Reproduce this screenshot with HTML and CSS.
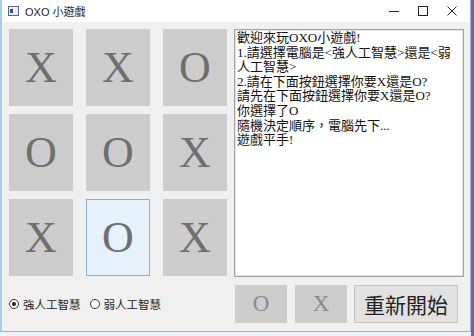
FILE: index.html
```html
<!DOCTYPE html>
<html lang="zh-Hant">
<head>
<meta charset="utf-8">
<title>OXO 小遊戲</title>
<link rel="stylesheet" href="styles.css">
</head>
<body>
<div class="screen">
  <div class="window">
    <div class="titlebar">
      <span class="app-icon"><span class="app-icon-dot"></span></span>
      <span class="title">OXO 小遊戲</span>
      <span class="controls">
        <span class="ctl"><svg width="10" height="10" viewBox="0 0 10 10"><path d="M0 5.5h10" stroke="#222" stroke-width="1"/></svg></span>
        <span class="ctl"><svg width="10" height="10" viewBox="0 0 10 10"><rect x="0.5" y="0.5" width="9" height="9" fill="none" stroke="#222" stroke-width="1"/></svg></span>
        <span class="ctl"><svg width="10" height="10" viewBox="0 0 10 10"><path d="M0.5 0.5L9.5 9.5M9.5 0.5L0.5 9.5" stroke="#222" stroke-width="1"/></svg></span>
      </span>
    </div>
    <div class="content">
      <div class="board">
        <div class="cell">X</div>
        <div class="cell">X</div>
        <div class="cell">O</div>
        <div class="cell">O</div>
        <div class="cell">O</div>
        <div class="cell">X</div>
        <div class="cell">X</div>
        <div class="cell hover">O</div>
        <div class="cell">X</div>
      </div>
      <div class="log">
        <div class="line">歡迎來玩OXO小遊戲!</div>
        <div class="line">1.請選擇電腦是&lt;強人工智慧&gt;還是&lt;弱</div>
        <div class="line">人工智慧&gt;</div>
        <div class="line">2.請在下面按鈕選擇你要X還是O?</div>
        <div class="line">請先在下面按鈕選擇你要X還是O?</div>
        <div class="line">你選擇了O</div>
        <div class="line">隨機決定順序，電腦先下...</div>
        <div class="line">遊戲平手!</div>
      </div>
      <div class="radios">
        <label class="radio"><span class="dot checked"></span>強人工智慧</label>
        <label class="radio"><span class="dot"></span>弱人工智慧</label>
      </div>
      <div class="buttons">
        <div class="btn pick">O</div>
        <div class="btn pick">X</div>
        <div class="btn restart">重新開始</div>
      </div>
    </div>
  </div>
  <div class="behind"></div>
</div>
</body>
</html>
```

FILE: styles.css
```css
html, body {
  margin: 0;
  padding: 0;
  background: #eef3f8;
}
.screen {
  width: 474px;
  height: 336px;
  display: flex;
  overflow: hidden;
}
.window {
  width: 468px;
  height: 331px;
  border-left: 2px solid #a9cbee;
  border-right: 1px solid #9ab4d2;
  border-bottom: 1px solid #8fb3db;
  background: #f0f0f0;
  display: flex;
  flex-direction: column;
}
.behind {
  width: 3px;
  height: 336px;
  background: #6a68a6;
}
.titlebar {
  height: 22px;
  background: #ffffff;
  display: flex;
  align-items: center;
  font-family: "Liberation Sans", "Noto Sans CJK TC", sans-serif;
  font-size: 11px;
  color: #222;
}
.app-icon {
  width: 9px;
  height: 8px;
  margin-left: 6px;
  margin-top: -1px;
  border: 1px solid #5a6a80;
  background: #e8eef6;
  display: flex;
  align-items: center;
}
.app-icon-dot {
  width: 3px;
  height: 4px;
  margin-left: 1px;
  background: #33507a;
}
.title {
  margin-left: 6px;
  margin-top: -1px;
}
.controls {
  margin-left: auto;
  display: flex;
  margin-right: 4px;
}
.ctl {
  width: 29px;
  height: 22px;
  display: flex;
  align-items: center;
  justify-content: center;
}
.content {
  display: grid;
  grid-template-columns: 218px 230px;
  grid-template-rows: 248px 38px;
  column-gap: 7px;
  row-gap: 8px;
  padding: 7px 0 0 7px;
}
.board {
  display: grid;
  grid-template-columns: repeat(3, 64px);
  grid-template-rows: repeat(3, 77px);
  column-gap: 13px;
  row-gap: 8px;
}
.cell {
  background: #cccccc;
  color: #6f6f6f;
  font-family: "Liberation Serif", serif;
  font-size: 44px;
  display: flex;
  align-items: center;
  justify-content: center;
  box-sizing: border-box;
}
.cell.hover {
  background: #e5f1fb;
  border: 1px solid #8eaed0;
}
.log {
  background: #ffffff;
  border: 1px solid #a3a3a3;
  box-shadow: inset 0 0 0 1px #e2e2e2;
  box-sizing: border-box;
  padding: 1px 0 0 2px;
  font-family: "Liberation Serif", "Noto Sans CJK TC", serif;
  font-size: 13px;
  line-height: 14.6px;
  color: #111;
}
.line {
  white-space: nowrap;
}
.radios {
  display: flex;
  align-items: center;
  gap: 9px;
  padding-left: 0;
  font-family: "Liberation Serif", "Noto Sans CJK TC", serif;
  font-size: 11.5px;
  color: #222;
}
.radio {
  display: flex;
  align-items: center;
  gap: 4px;
}
.dot {
  width: 8px;
  height: 8px;
  border: 1px solid #333;
  border-radius: 50%;
  background: #fff;
  display: flex;
  align-items: center;
  justify-content: center;
}
.dot.checked::after {
  content: "";
  width: 4px;
  height: 4px;
  border-radius: 50%;
  background: #222;
}
.buttons {
  display: flex;
  gap: 7px;
  padding-left: 1px;
}
.btn {
  height: 38px;
  display: flex;
  align-items: center;
  justify-content: center;
  box-sizing: border-box;
}
.btn.pick {
  width: 52px;
  background: #cccccc;
  color: #8a8a8a;
  font-family: "Liberation Serif", serif;
  font-size: 23px;
}
.btn.pick + .btn.pick {
  margin-left: 1px;
}
.btn.restart {
  width: 104px;
  background: #e1e1e1;
  border: 1px solid #c4c4c4;
  color: #222;
  font-family: "Noto Sans CJK TC", sans-serif;
  font-size: 21px;
}
```
